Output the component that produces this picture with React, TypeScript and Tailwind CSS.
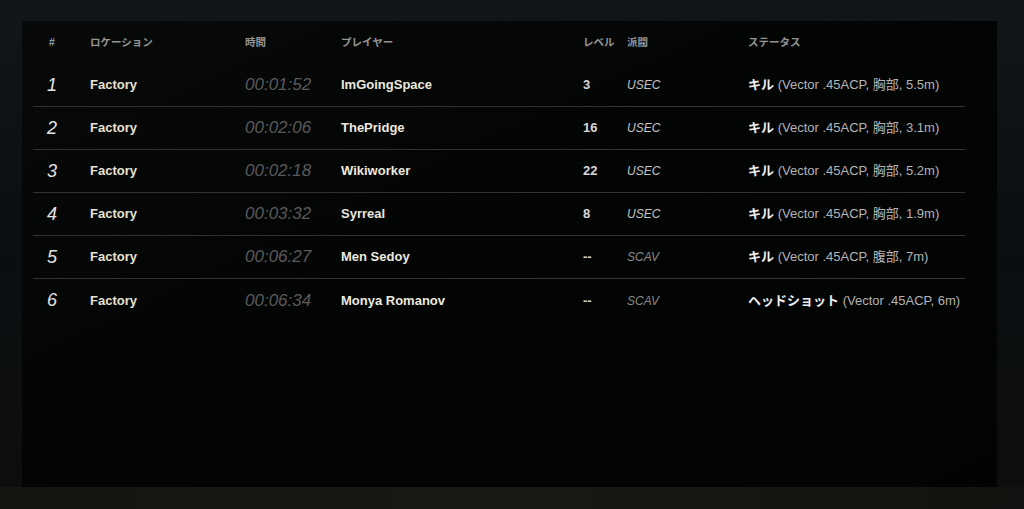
const rows = [
  { n: "1", time: "00:01:52", player: "ImGoingSpace", level: "3", faction: "USEC", kind: "キル", detail: "(Vector .45ACP, 胸部, 5.5m)" },
  { n: "2", time: "00:02:06", player: "ThePridge", level: "16", faction: "USEC", kind: "キル", detail: "(Vector .45ACP, 胸部, 3.1m)" },
  { n: "3", time: "00:02:18", player: "Wikiworker", level: "22", faction: "USEC", kind: "キル", detail: "(Vector .45ACP, 胸部, 5.2m)" },
  { n: "4", time: "00:03:32", player: "Syrreal", level: "8", faction: "USEC", kind: "キル", detail: "(Vector .45ACP, 胸部, 1.9m)" },
  { n: "5", time: "00:06:27", player: "Men Sedoy", level: "--", faction: "SCAV", kind: "キル", detail: "(Vector .45ACP, 腹部, 7m)" },
  { n: "6", time: "00:06:34", player: "Monya Romanov", level: "--", faction: "SCAV", kind: "ヘッドショット", detail: "(Vector .45ACP, 6m)" },
];

const font = { fontFamily: '"Liberation Sans", "Noto Sans CJK JP", sans-serif' };

export default function App() {
  return (
    <div
      className="w-[1024px] h-[509px] overflow-hidden bg-gradient-to-b from-[#111619] via-[#0b0e10] to-[#0c0d0e]"
      style={font}
    >
      <div className="h-[21px]" />
      <div className="ml-[22px] w-[975px] h-[466px] bg-gradient-to-br from-[#080909] via-[#030404] to-[#020303] pl-[11px]">
        {/* header */}
        <div className="flex items-center h-[43px] w-[932px] text-[10.5px] font-bold text-[#959595]">
          <div className="w-[57px] pl-[16px]">#</div>
          <div className="w-[155px]">ロケーション</div>
          <div className="w-[96px]">時間</div>
          <div className="w-[242px]">プレイヤー</div>
          <div className="w-[44px]">レベル</div>
          <div className="w-[121px]">派閥</div>
          <div className="flex-1">ステータス</div>
        </div>

        {rows.map((r, i) => (
          <div
            key={r.n}
            className={`flex items-center h-[43px] w-[932px] ${
              i < rows.length - 1 ? "border-b border-[#303235]" : ""
            }`}
          >
            <div className="w-[57px] pl-[14px] text-[18px] italic font-light text-[#e4e4e4]">{r.n}</div>
            <div className="w-[155px] text-[13px] font-bold text-[#e6e2d3]">Factory</div>
            <div className="w-[96px] text-[17px] italic text-[#5a5a5a]">{r.time}</div>
            <div className="w-[242px] text-[13px] font-bold text-[#ece9df]">{r.player}</div>
            <div className="w-[44px] text-[13px] font-bold text-[#d8d8d8]">{r.level}</div>
            <div
              className={`w-[121px] text-[12px] italic ${
                r.faction === "USEC" ? "text-[#c4c4c4]" : "text-[#8a8a8a]"
              }`}
            >
              {r.faction}
            </div>
            <div className="flex-1 text-[13px] text-[#b4b4b4] whitespace-nowrap">
              <span className="font-bold text-[13px] text-[#eeeeee]">{r.kind}</span> {r.detail}
            </div>
          </div>
        ))}
      </div>
      <div className="h-[22px] w-full bg-gradient-to-r from-[#15140f] via-[#1a1813] to-[#121210]" />
    </div>
  );
}
